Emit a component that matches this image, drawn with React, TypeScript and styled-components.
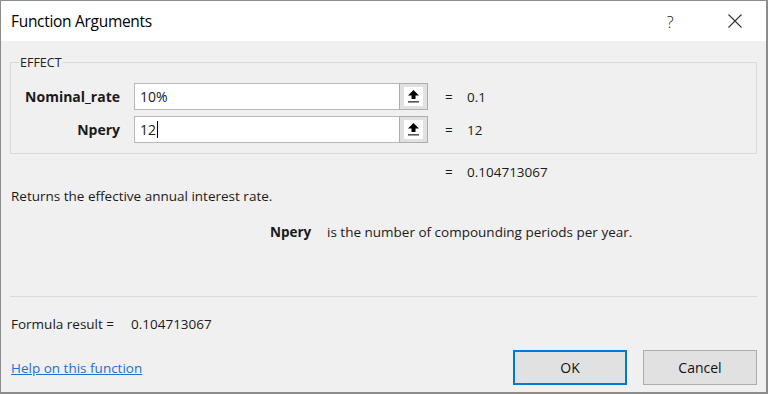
import React from "react";
import styled, { createGlobalStyle } from "styled-components";

const GlobalStyle = createGlobalStyle`
  html, body {
    margin: 0;
    padding: 0;
    background: #ffffff;
  }
  * {
    box-sizing: border-box;
  }
`;

const FONT = `"Open Sans", "Noto Sans", "Liberation Sans", sans-serif`;
const COLUMNS = "123px 265px 29px 39px 1fr";

const Window = styled.div`
  width: 768px;
  height: 394px;
  display: flex;
  flex-direction: column;
  background: #f0f0f0;
  border: 1px solid #8c8c8c;
  border-bottom-width: 2px;
  border-right-width: 2px;
  font-family: ${FONT};
  font-size: 13.5px;
  color: #1a1a1a;
  overflow: hidden;
`;

const TitleBar = styled.div`
  height: 40px;
  flex: none;
  display: flex;
  align-items: center;
  background: #ffffff;
  padding: 0 9px 0 10px;
`;

const Title = styled.div`
  flex: 1;
  font-size: 15.5px;
  letter-spacing: -0.3px;
  color: #000;
`;

const TitleButton = styled.div<{ $gap?: number }>`
  width: 44px;
  height: 40px;
  margin-right: ${(p) => p.$gap ?? 0}px;
  display: flex;
  align-items: center;
  justify-content: center;
  color: #222;
  font-size: 17px;
  font-weight: 300;
`;

const Body = styled.div`
  flex: 1;
  display: flex;
  flex-direction: column;
  padding: 13px 9px 0 9px;
`;

const Group = styled.fieldset`
  margin: 0;
  padding: 12px 0 10px 0;
  border: 1px solid #dadada;
  min-width: 0;
`;

const Legend = styled.legend`
  font-size: 12.5px;
  padding: 0 1px;
  margin-left: 8px;
  color: #222;
`;

const ArgGrid = styled.div`
  display: grid;
  grid-template-columns: ${COLUMNS};
  row-gap: 6px;
  align-items: center;
`;

const ArgLabel = styled.label`
  font-weight: 700;
  font-size: 14px;
  text-align: right;
  padding-right: 14px;
`;

const InputBox = styled.div`
  height: 27px;
  background: #ffffff;
  border: 1px solid #b9b9b9;
  border-right: none;
  display: flex;
  align-items: center;
  padding-left: 5px;
  font-size: 14px;
`;

const Caret = styled.span`
  display: inline-block;
  width: 1px;
  height: 17px;
  background: #000;
  margin-left: 1px;
`;

const RefButton = styled.div`
  height: 27px;
  background: #e1e1e1;
  border: 1px solid #adadad;
  display: flex;
  align-items: center;
  justify-content: center;
`;

const RefInner = styled.div`
  width: 19px;
  height: 19px;
  background: #ffffff;
  display: flex;
  align-items: center;
  justify-content: center;
`;

const Equals = styled.div`
  padding-left: 17px;
`;

const Value = styled.div`
  font-size: 13.5px;
`;

const ResultGrid = styled(ArgGrid)`
  margin-top: 9px;
  padding-left: 1px;
`;

const Description = styled.div`
  margin-top: 6px;
  padding-left: 1px;
`;

const ArgHelp = styled.div`
  margin-top: 18px;
  padding-left: 260px;
  display: flex;
`;

const ArgHelpName = styled.span`
  font-weight: 700;
  width: 57px;
`;

const Separator = styled.div`
  margin-top: 55px;
  border-top: 1px solid #dadada;
`;

const FormulaRow = styled.div`
  margin-top: 18px;
  padding-left: 1px;
  display: flex;
`;

const FormulaLabel = styled.span`
  width: 120px;
`;

const Footer = styled.div`
  margin-top: 17px;
  display: flex;
  align-items: center;
  padding-left: 1px;
`;

const HelpLink = styled.a`
  flex: 1;
  color: #1f6fd1;
  text-decoration: underline;
  cursor: pointer;
`;

const DialogButton = styled.button<{ $primary?: boolean }>`
  width: 114px;
  height: 35px;
  margin-left: 16px;
  background: #e1e1e1;
  border: ${(p) => (p.$primary ? "2px solid #0078d7" : "1px solid #adadad")};
  font-family: ${FONT};
  font-size: 14px;
  color: #111;
  padding: 0;
`;

const ArrowIcon = () => (
  <svg width="13" height="15" viewBox="0 0 13 15">
    <path d="M6.5 1 L12 6.5 L8.5 6.5 L8.5 10 L4.5 10 L4.5 6.5 L1 6.5 Z" fill="#000" />
    <rect x="1" y="12" width="11" height="1.6" fill="#555" />
  </svg>
);

const CloseIcon = () => (
  <svg width="16" height="16" viewBox="0 0 16 16">
    <path d="M1.5 1.5 L14.5 14.5 M14.5 1.5 L1.5 14.5" stroke="#333" strokeWidth="1.1" />
  </svg>
);

const args = [
  { name: "Nominal_rate", input: "10%", value: "0.1", caret: false },
  { name: "Npery", input: "12", value: "12", caret: true },
];

export default function App() {
  return (
    <>
      <GlobalStyle />
      <Window>
        <TitleBar>
          <Title>Function Arguments</Title>
          <TitleButton $gap={21}>?</TitleButton>
          <TitleButton>
            <CloseIcon />
          </TitleButton>
        </TitleBar>
        <Body>
          <Group>
            <Legend>EFFECT</Legend>
            <ArgGrid>
              {args.map((a) => (
                <React.Fragment key={a.name}>
                  <ArgLabel>{a.name}</ArgLabel>
                  <InputBox>
                    {a.input}
                    {a.caret && <Caret />}
                  </InputBox>
                  <RefButton>
                    <RefInner>
                      <ArrowIcon />
                    </RefInner>
                  </RefButton>
                  <Equals>=</Equals>
                  <Value>{a.value}</Value>
                </React.Fragment>
              ))}
            </ArgGrid>
          </Group>
          <ResultGrid>
            <span />
            <span />
            <span />
            <Equals>=</Equals>
            <Value>0.104713067</Value>
          </ResultGrid>
          <Description>Returns the effective annual interest rate.</Description>
          <ArgHelp>
            <ArgHelpName>Npery</ArgHelpName>
            <span>is the number of compounding periods per year.</span>
          </ArgHelp>
          <Separator />
          <FormulaRow>
            <FormulaLabel>Formula result =</FormulaLabel>
            <span>0.104713067</span>
          </FormulaRow>
          <Footer>
            <HelpLink>Help on this function</HelpLink>
            <DialogButton $primary>OK</DialogButton>
            <DialogButton>Cancel</DialogButton>
          </Footer>
        </Body>
      </Window>
    </>
  );
}
